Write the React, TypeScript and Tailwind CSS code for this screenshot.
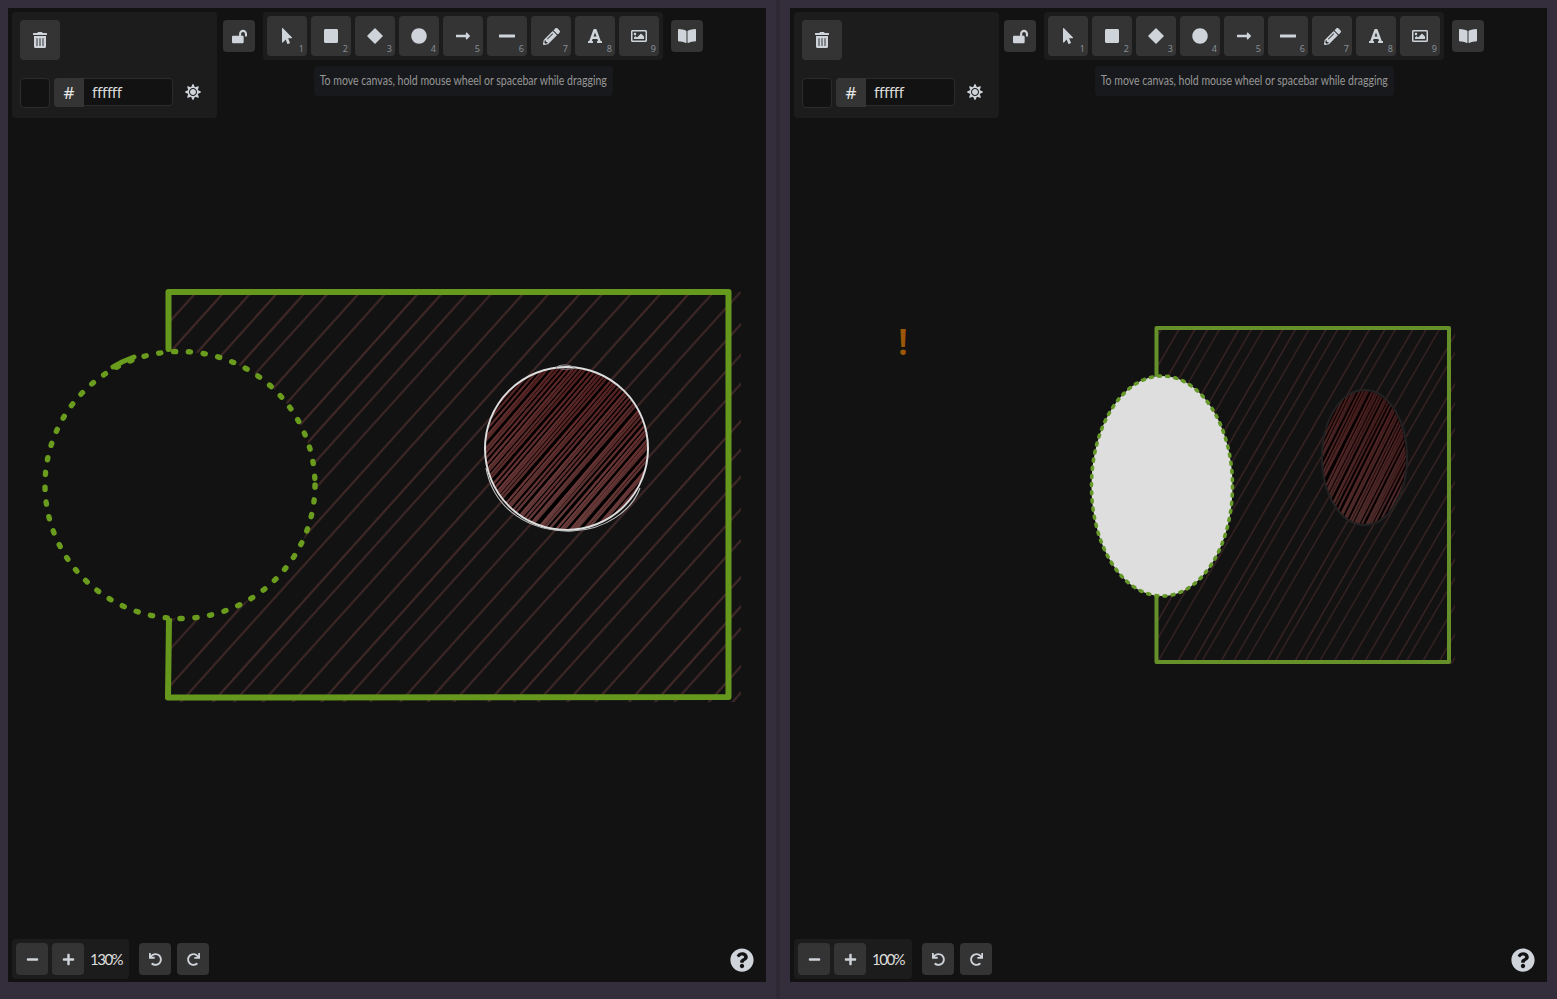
import React from "react";
import {
  FaTrashAlt, FaLockOpen, FaMousePointer, FaSquare, FaCircle, FaLongArrowAltRight, FaPencilAlt, FaFont,
  FaRegImage, FaBookOpen, FaSun, FaMinus, FaPlus, FaUndo, FaRedo, FaQuestionCircle,
} from "react-icons/fa";

const sans = "font-['Noto_Sans','Liberation_Sans',sans-serif]";
const narrow = "font-['Lato','Liberation_Sans',sans-serif]";

function Diamond() {
  return (
    <svg width="16" height="16" viewBox="0 0 16 16">
      <path d="M8 1 L15 8 L8 15 L1 8 Z" fill="#ced4da" stroke="#ced4da" strokeWidth="1.5" strokeLinejoin="round" />
    </svg>
  );
}
function LineIcon() {
  return (
    <svg width="16" height="16" viewBox="0 0 16 16">
      <rect x="0" y="6.5" width="16" height="3" rx="0.5" fill="#ced4da" />
    </svg>
  );
}

const tools: [React.ReactNode, number][] = [
  [<FaMousePointer size={16} />, 1],
  [<FaSquare size={16} />, 2],
  [<Diamond />, 3],
  [<FaCircle size={16} />, 4],
  [<FaLongArrowAltRight size={16} />, 5],
  [<LineIcon />, 6],
  [<FaPencilAlt size={17} />, 7],
  [<FaFont size={16} />, 8],
  [<FaRegImage size={16} />, 9],
];

function hatch(c0: number, c1: number, step: number, k: number, y0: number, y1: number, seed: number) {
  const out: { x1: number; y1: number; x2: number; y2: number; o: number }[] = [];
  let i = 0;
  for (let c = c0; c < c1; c += step) {
    i++;
    const r = Math.sin(i * 12.9898 + seed) * 43758.5453;
    const j = r - Math.floor(r);
    const cc = c + (j - 0.5) * step * 0.35;
    out.push({
      x1: cc - k * y0,
      y1: y0,
      x2: cc - k * y1 + (j - 0.5) * 3,
      y2: y1,
      o: 0.85 + j * 0.15,
    });
  }
  return out;
}

function Lines({ data, color, width }: { data: ReturnType<typeof hatch>; color: string; width: number }) {
  return (
    <g stroke={color} strokeWidth={width} strokeLinecap="round">
      {data.map((l, i) => (
        <line key={i} x1={l.x1} y1={l.y1} x2={l.x2} y2={l.y2} opacity={l.o} />
      ))}
    </g>
  );
}

function CanvasLeft() {
  return (
    <svg className="absolute inset-0 w-full h-full" viewBox="8 8 758 974">
      <defs>
        <clipPath id="l-rect"><rect x="169" y="292" width="572" height="410" /></clipPath>
        <clipPath id="l-circ"><ellipse cx="566.5" cy="449" rx="81" ry="81" /></clipPath>
      </defs>
      <g clipPath="url(#l-rect)">
        <Lines data={hatch(430, 1380, 27.5, 0.9, 285, 705, 1)} color="#3f2828" width={2.4} />
      </g>
      <path d="M168.5 349 L168.5 292 L728.5 292 L728.5 697 L168 697.5 L169 619" fill="none" stroke="#66981e" strokeWidth={6} strokeLinejoin="round" strokeLinecap="round" />
      <ellipse cx="180" cy="485" rx="135" ry="133.5" fill="#121212" stroke="#6a9c1e" strokeWidth={5.4} strokeDasharray="2.2 12.7" strokeLinecap="round" />
      <path d="M113 367 L122 362 L134 357" fill="none" stroke="#6a9c1e" strokeWidth={5} strokeLinecap="round" />
      <g clipPath="url(#l-circ)">
        <rect x="480" y="360" width="175" height="175" fill="#1a1313" />
        <Lines data={hatch(760, 1180, 4.8, 0.86, 360, 540, 3)} color="#6f4040" width={2.5} />
      </g>
      <ellipse cx="566.5" cy="448.5" rx="81.5" ry="81.5" fill="none" stroke="#dddddd" strokeWidth={2} />
      <path d="M486 468 C494 510 530 532 572 531 C606 530 632 510 640 488" fill="none" stroke="#bdbdbd" strokeWidth={1.2} />
      <path d="M556 368 C558 364 570 364 575 368 C568 370 560 369 556 368Z" fill="none" stroke="#999999" strokeWidth={1} />
    </svg>
  );
}

function CanvasRight() {
  return (
    <svg className="absolute inset-0 w-full h-full" viewBox="790 8 757 974">
      <defs>
        <clipPath id="r-rect"><rect x="1156" y="328" width="299" height="336" /></clipPath>
        <clipPath id="r-circ"><ellipse cx="1364" cy="457.5" rx="42" ry="67" /></clipPath>
      </defs>
      <g clipPath="url(#r-rect)">
        <Lines data={hatch(1340, 1850, 14.6, 0.58, 320, 670, 5)} color="#372323" width={1.7} />
      </g>
      <path d="M1156.5 376 L1156.5 328 L1449 328 L1449 662 L1156.5 662 L1156.5 596" fill="none" stroke="#66912a" strokeWidth={4} strokeLinejoin="round" />
      <ellipse cx="1162" cy="486" rx="70.5" ry="110" fill="#dedede" stroke="#66982a" strokeWidth={3.6} strokeDasharray="2 6.2" strokeLinecap="round" />
      <g clipPath="url(#r-circ)">
        <rect x="1320" y="390" width="90" height="135" fill="#1c1313" />
        <Lines data={hatch(1510, 1680, 3.2, 0.5, 385, 530, 7)} color="#553030" width={2.1} />
      </g>
      <ellipse cx="1364.5" cy="457.5" rx="42.5" ry="67.5" fill="none" stroke="#222222" strokeWidth={2} />
    </svg>
  );
}

function Btn32({ children }: { children: React.ReactNode }) {
  return <div className="w-8 h-8 rounded bg-[#343434] text-[#ced4da] flex items-center justify-center shrink-0">{children}</div>;
}

function TopBar({ second }: { second?: boolean }) {
  return (
    <div className="flex items-start">
      <div className="w-[205px] h-[106px] rounded bg-[#1c1c1c] pt-2 px-2 pb-[10px] flex flex-col justify-between shrink-0">
        <div className="w-10 h-10 rounded bg-[#343434] text-[#ced4da] flex items-center justify-center">
          <FaTrashAlt size={16} />
        </div>
        <div className="flex items-center">
          <div className="w-[30px] h-[30px] rounded border border-[#2c2c2c] bg-[#121212] shrink-0" />
          <div className="ml-1 w-[119px] h-[28px] flex rounded border border-[#2c2c2c] bg-[#121212] -mt-[2px]">
            <div className={`w-[30px] h-[29px] -mt-px -ml-px rounded-l bg-[#343434] flex items-center justify-center text-[#e8e8e8] text-[17px] ${sans}`}>#</div>
            <div className={`pl-2 flex items-center text-[#dcdcdc] text-[15px] tracking-[-0.2px] ${sans}`}>ffffff</div>
          </div>
          <div className="ml-3 -mt-[2px] w-4 h-4 text-[#ced4da] flex items-center justify-center"><FaSun size={16} /></div>
        </div>
      </div>
      <div className={`pt-2 ${second ? "ml-[5px]" : "ml-[6px]"}`}>
        <Btn32><FaLockOpen size={15} /></Btn32>
      </div>
      <div className="ml-2 flex flex-col items-center">
        <div className="w-[400px] h-12 rounded bg-[#1c1c1c] p-1 flex gap-1">
          {tools.map(([icon, n]) => (
            <div key={n} className="relative w-10 h-10 rounded bg-[#343434] text-[#ced4da] flex items-center justify-center">
              {icon}
              <span className={`absolute right-[3px] bottom-[2px] text-[9px] leading-[10px] text-[#868e96] ${sans}`}>{n}</span>
            </div>
          ))}
        </div>
        <div className={`mt-[6px] w-[299px] h-[30px] rounded bg-[#18191c] flex items-center justify-center text-[#969696] text-[13px] whitespace-nowrap ${narrow}`}>
          <span className="inline-block scale-x-[0.81]">To move canvas, hold mouse wheel or spacebar while dragging</span>
        </div>
      </div>
      <div className="pt-2 ml-2"><Btn32><FaBookOpen size={18} /></Btn32></div>
    </div>
  );
}

function BottomBar({ zoom, second }: { zoom: string; second?: boolean }) {
  return (
    <div className="flex items-center">
      <div className={`h-10 rounded bg-[#1c1c1c] p-1 flex items-center gap-1 shrink-0 ${second ? "w-[118px]" : "w-[117px]"}`}>
        <Btn32><FaMinus size={13} /></Btn32>
        <Btn32><FaPlus size={13} /></Btn32>
        <span className={`ml-[2px] text-[15px] tracking-[-1.5px] text-[#dcdcdc] ${narrow}`}>{zoom}</span>
      </div>
      <div className="flex gap-[6px] ml-[10px]">
        <Btn32><FaUndo size={13} /></Btn32>
        <Btn32><FaRedo size={13} /></Btn32>
      </div>
      <div className="ml-auto mr-[8px] mt-[2px] text-[#ced4da]"><FaQuestionCircle size={24} /></div>
    </div>
  );
}

function Pane({ second, zoom, children }: { second?: boolean; zoom: string; children: React.ReactNode }) {
  return (
    <div className={`relative h-[974px] bg-[#121212] overflow-hidden flex flex-col justify-between px-1 pt-1 pb-[3px] shrink-0 ${second ? "w-[757px]" : "w-[758px]"}`}>
      {children}
      <div className="relative"><TopBar second={second} /></div>
      <div className="relative"><BottomBar zoom={zoom} second={second} /></div>
    </div>
  );
}

export default function App() {
  return (
    <div className="w-[1557px] h-[999px] bg-[#342d3b] flex pt-2 overflow-hidden">
      <div className="ml-2"><Pane zoom="130%"><CanvasLeft /></Pane></div>
      <div className="ml-[10px] w-[4px] h-[999px] -mt-2 bg-[#2f2935]" />
      <div className="ml-[10px]"><Pane second zoom="100%"><CanvasRight />
        <div className={`absolute left-[108px] top-[314px] text-[36px] leading-[40px] font-semibold text-[#9c5608] ${sans}`}>!</div>
      </Pane></div>
    </div>
  );
}
